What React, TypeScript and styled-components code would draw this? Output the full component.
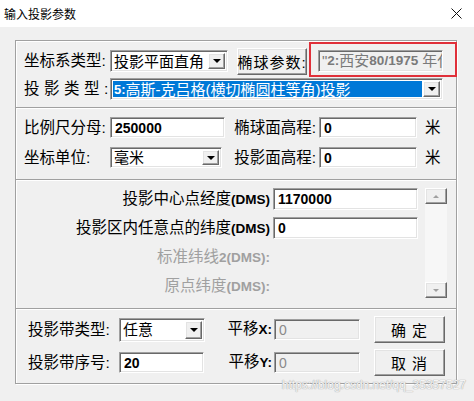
import styled, { createGlobalStyle, css } from "styled-components"

const GlobalStyle = createGlobalStyle`
    html, body {
        margin: 0;
        padding: 0;
        background: #f0f0f0;
    }

    body {
        font-family: "Liberation Sans", "Noto Sans CJK SC", sans-serif;
        color: #000;
    }
`

// classic win32 3d borders
const sunken = css`
    border: 1px solid;
    border-color: #a0a0a0 #ffffff #ffffff #a0a0a0;
    box-shadow: inset 1px 1px 0 #696969, inset -1px -1px 0 #e3e3e3;
`

const raised = css`
    border: 1px solid;
    border-color: #ffffff #696969 #696969 #ffffff;
    box-shadow: inset -1px -1px 0 #a0a0a0, inset 1px 1px 0 #e3e3e3;
`

interface ComboProps {
    value: React.ReactNode
    width: number
    height?: number
    selected?: boolean
}

const Combo = ({ value, width, height = 22, selected }: ComboProps) => (
    <ComboWrapper style={{ width, height }}>
        <ComboValue $selected={selected}>{value}</ComboValue>
        <DropButton>
            <Arrow />
        </DropButton>
    </ComboWrapper>
)

const TextBox = ({ value, width, disabled }: { value: React.ReactNode, width: number, disabled?: boolean }) => (
    <Input style={{ width }} $disabled={disabled}>{value}</Input>
)

const Scrollbar = () => (
    <ScrollTrack>
        <ScrollButton><SmallArrow $up /></ScrollButton>
        <ScrollButton><SmallArrow /></ScrollButton>
    </ScrollTrack>
)

export default function App() {
    return (
        <>
            <GlobalStyle />
            <Window>
                <TitleBar>
                    <span>输入投影参数</span>
                    <svg width="11" height="11" viewBox="0 0 11 11">
                        <path d="M0.5 0.5 L10.5 10.5 M10.5 0.5 L0.5 10.5" stroke="#111" strokeWidth="1" fill="none" />
                    </svg>
                </TitleBar>
                <Body>
                    <Group>
                        <Section $top={1} $bottom={7} $gap={1}>
                            <TopRow>
                                <Label $width={86}>坐标系类型:</Label>
                                <Combo value="投影平面直角" width={118} />
                                <PushButton $width={70} $height={27} $left={9}>椭球参数:</PushButton>
                                <Highlighted>
                                    <ReadOnlyBox>
                                        "<Latin>2:</Latin>西安<Latin>80/1975</Latin>&nbsp;年代坐标系
                                    </ReadOnlyBox>
                                </Highlighted>
                            </TopRow>
                            <Row>
                                <Label $width={86} $spaced>投影类型:</Label>
                                <Combo
                                    value={<><Latin>5:</Latin>高斯-克吕格(横切椭圆柱等角)投影</>}
                                    width={333}
                                    selected
                                />
                            </Row>
                        </Section>
                        <Divider />
                        <Section $top={8} $bottom={11} $gap={9}>
                            <ParamGrid>
                                <Label>比例尺分母:</Label>
                                <TextBox value="250000" width={115} />
                                <Label $right>椭球面高程:</Label>
                                <TextBox value="0" width={98} />
                                <Unit>米</Unit>
                            </ParamGrid>
                            <ParamGrid>
                                <Label>坐标单位:</Label>
                                <Combo value="毫米" width={112} height={21} />
                                <Label $right>投影面高程:</Label>
                                <TextBox value="0" width={98} />
                                <Unit>米</Unit>
                            </ParamGrid>
                        </Section>
                        <Divider />
                        <ScrollSection>
                            <DmsList>
                                <Label $right>投影中心点经度<Latin>(DMS)</Latin></Label>
                                <TextBox value="1170000" width={145} />
                                <Label $right>投影区内任意点的纬度<Latin>(DMS)</Latin></Label>
                                <TextBox value="0" width={145} />
                                <Label $right $muted>标准纬线<Latin>2(DMS):</Latin></Label>
                                <span />
                                <Label $right $muted>原点纬度<Latin>(DMS):</Latin></Label>
                                <span />
                            </DmsList>
                            <Scrollbar />
                        </ScrollSection>
                        <Divider />
                        <Section $top={6} $bottom={7} $gap={6} $left={12}>
                            <ZoneGrid>
                                <Label>投影带类型:</Label>
                                <Combo value="任意" width={86} height={24} />
                                <Label $right>平移<Latin>X:</Latin></Label>
                                <TextBox value="0" width={86} disabled />
                                <PushButton $width={71} $height={27}>确 定</PushButton>
                            </ZoneGrid>
                            <ZoneGrid>
                                <Label>投影带序号:</Label>
                                <TextBox value="20" width={85} />
                                <Label $right>平移<Latin>Y:</Latin></Label>
                                <TextBox value="0" width={86} disabled />
                                <PushButton $width={71} $height={27}>取 消</PushButton>
                            </ZoneGrid>
                        </Section>
                    </Group>
                </Body>
                <Watermark>https://blog.csdn.net/qq_35357527</Watermark>
            </Window>
        </>
    )
}

const Window = styled.div`
    position: relative;
    width: 474px;
    height: 401px;
    overflow: hidden;
    background: #f0f0f0;
    display: flex;
    flex-direction: column;
`

const TitleBar = styled.header`
    height: 27px;
    box-sizing: border-box;
    padding: 0 12px 1px 4px;
    background: #ffffff;
    display: flex;
    align-items: center;
    justify-content: space-between;
    font-family: "Noto Sans CJK SC", sans-serif;
    font-size: 12px;
`

const Body = styled.main`
    padding: 13px 17px 0 15px;
`

const Group = styled.section`
    display: flex;
    flex-direction: column;
    border: 1px solid #a0a0a0;
    box-shadow: inset 1px 1px 0 #ffffff, 1px 1px 0 #ffffff;
`

const Section = styled.div<{ $top: number, $bottom: number, $gap: number, $left?: number }>`
    display: flex;
    flex-direction: column;
    gap: ${p => p.$gap}px;
    padding: ${p => p.$top}px 12px ${p => p.$bottom}px ${p => p.$left ?? 8}px;
`

const Divider = styled.hr`
    margin: 0;
    height: 0;
    border: none;
    border-top: 1px solid #a0a0a0;
    border-bottom: 1px solid #ffffff;
`

const Row = styled.div`
    display: flex;
    align-items: center;
`

const TopRow = styled(Row)`
    height: 35px;
    box-sizing: border-box;
    padding-top: 3px;
`

const Label = styled.span<{ $width?: number, $right?: boolean, $spaced?: boolean, $muted?: boolean }>`
    ${p => p.$width && `width: ${p.$width}px; flex: none;`}
    font-size: 15.5px;
    line-height: 20px;
    white-space: nowrap;
    text-align: ${p => p.$right ? "right" : "left"};
    letter-spacing: ${p => p.$spaced ? "4.5px" : "0"};
    color: ${p => p.$muted ? "#a0a0a0" : "#000"};
`

const Latin = styled.b`
    font-family: "Liberation Sans", sans-serif;
    font-weight: 700;
    font-size: 13.5px;
    letter-spacing: 0;
`

const Unit = styled.span`
    padding-left: 8px;
    font-size: 15.5px;
    line-height: 20px;
`

const Input = styled.div<{ $disabled?: boolean }>`
    ${sunken};
    box-sizing: border-box;
    height: 21px;
    padding: 0 4px;
    display: flex;
    align-items: center;
    background: ${p => p.$disabled ? "#f0f0f0" : "#ffffff"};
    color: ${p => p.$disabled ? "#8a8a8a" : "#000"};
    font-weight: ${p => p.$disabled ? 400 : 700};
    font-size: 14px;
    line-height: 16px;
    overflow: hidden;
    white-space: nowrap;
`

const ComboWrapper = styled.div`
    ${sunken};
    box-sizing: border-box;
    display: flex;
    align-items: stretch;
    padding: 2px;
    background: #ffffff;
    flex: none;
`

const ComboValue = styled.div<{ $selected?: boolean }>`
    flex: 1;
    min-width: 0;
    display: flex;
    align-items: center;
    padding-left: 1px;
    margin-right: 1px;
    overflow: hidden;
    white-space: nowrap;
    font-size: 15px;
    line-height: 15px;
    background: ${p => p.$selected ? "#0078d7" : "transparent"};
    color: ${p => p.$selected ? "#ffffff" : "#000"};

    b { font-size: 13px; }
`

const DropButton = styled.div`
    ${raised};
    box-sizing: border-box;
    width: 17px;
    flex: none;
    background: #f0f0f0;
    display: flex;
    align-items: center;
    justify-content: center;
`

const Arrow = styled.i`
    width: 0;
    height: 0;
    border-left: 4px solid transparent;
    border-right: 4px solid transparent;
    border-top: 4px solid #000;
`

const PushButton = styled.div<{ $width: number, $height: number, $left?: number }>`
    ${raised};
    box-sizing: border-box;
    width: ${p => p.$width}px;
    height: ${p => p.$height}px;
    margin-left: ${p => p.$left ?? 0}px;
    flex: none;
    display: flex;
    align-items: center;
    justify-content: center;
    background: #f0f0f0;
    font-size: 15px;
    letter-spacing: 1px;
    white-space: nowrap;
`

const Highlighted = styled.div`
    position: relative;
    margin-left: 11px;

    &::after {
        content: "";
        position: absolute;
        top: -8px;
        bottom: -5px;
        left: -9px;
        right: -14px;
        border: 2px solid #e0303a;
        pointer-events: none;
    }
`

const ReadOnlyBox = styled.div`
    ${sunken};
    box-sizing: border-box;
    width: 125px;
    height: 22px;
    padding: 0 3px;
    display: flex;
    align-items: center;
    overflow: hidden;
    white-space: nowrap;
    background: #f0f0f0;
    color: #7a7a7a;
    font-size: 15px;
    line-height: 16px;

    b { font-size: 13.5px; }
`

const ParamGrid = styled.div`
    display: grid;
    grid-template-columns: 86px 115px 94px 98px auto;
    align-items: center;
    height: 21px;

    & > :nth-child(3) { padding-right: 3px; }
`

const ScrollSection = styled.div`
    display: flex;
    align-items: flex-start;
    gap: 7px;
    padding: 7px 8px 10px 8px;
`

const DmsList = styled.div`
    display: grid;
    grid-template-columns: 246px 145px;
    grid-auto-rows: 22px;
    row-gap: 7px;
    column-gap: 3px;
    align-items: center;

    & > div { height: 22px; }
`

const ScrollTrack = styled.div`
    width: 22px;
    height: 110px;
    display: flex;
    flex-direction: column;
    justify-content: space-between;
    background: #f7f7f7;
`

const ScrollButton = styled.div`
    ${raised};
    box-sizing: border-box;
    height: 16px;
    background: #f0f0f0;
    display: flex;
    align-items: center;
    justify-content: center;
`

const SmallArrow = styled.i<{ $up?: boolean }>`
    width: 0;
    height: 0;
    border-left: 3px solid transparent;
    border-right: 3px solid transparent;
    ${p => p.$up
        ? "border-bottom: 3px solid #a0a0a0;"
        : "border-top: 3px solid #a0a0a0;"}
`

const ZoneGrid = styled.div`
    display: grid;
    grid-template-columns: 91px 86px 69px 86px auto;
    align-items: center;
    height: 27px;

    & > :nth-child(3) { padding-right: 2px; }
    & > :nth-child(5) { margin-left: 14px; }
`

const Watermark = styled.div`
    position: absolute;
    right: 8px;
    bottom: 9px;
    font-family: "Liberation Sans", sans-serif;
    font-size: 12px;
    color: #f4f4f4;
    text-shadow: 0 0 1px #a8a8a8, 0 0 1px #a8a8a8;
    pointer-events: none;
`
